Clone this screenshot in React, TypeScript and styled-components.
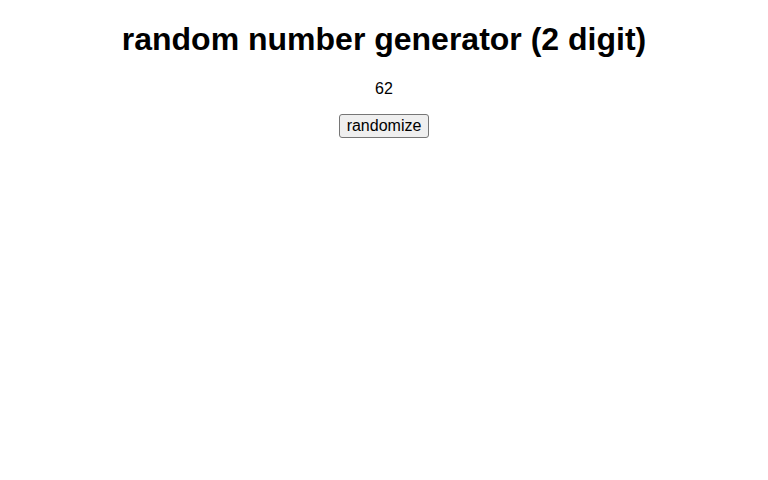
import React, { useState } from 'react';
import styled, { createGlobalStyle } from 'styled-components';

const GlobalStyle = createGlobalStyle`
  body {
    margin: 0;
    background: #ffffff;
    color: #000000;
    font-family: "Liberation Sans", Arial, sans-serif;
  }
`;

const Page = styled.main`
  padding: 0 8px;
  text-align: center;
`;

const Title = styled.h1`
  font-size: 32px;
  font-weight: bold;
  margin: 20.5px 0 22.4px;
  line-height: normal;
`;

const Result = styled.p`
  font-size: 16px;
  margin: 16px 0;
  line-height: normal;
`;

const RandomButton = styled.button`
  font-family: "Liberation Sans", Arial, sans-serif;
  font-size: 16px;
  line-height: normal;
  color: #000000;
  background: #efefef;
  border: 1px solid #767676;
  border-radius: 3px;
  padding: 2px 7px;
  cursor: pointer;

  &:hover {
    background: #e5e5e5;
  }
`;

const randomTwoDigit = () => Math.floor(Math.random() * 90) + 10;

const App: React.FC = () => {
  const [value, setValue] = useState(62);

  return (
    <>
      <GlobalStyle />
      <Page>
        <Title>random number generator (2 digit)</Title>
        <Result>{value}</Result>
        <RandomButton onClick={() => setValue(randomTwoDigit())}>randomize</RandomButton>
      </Page>
    </>
  );
};

export default App;
